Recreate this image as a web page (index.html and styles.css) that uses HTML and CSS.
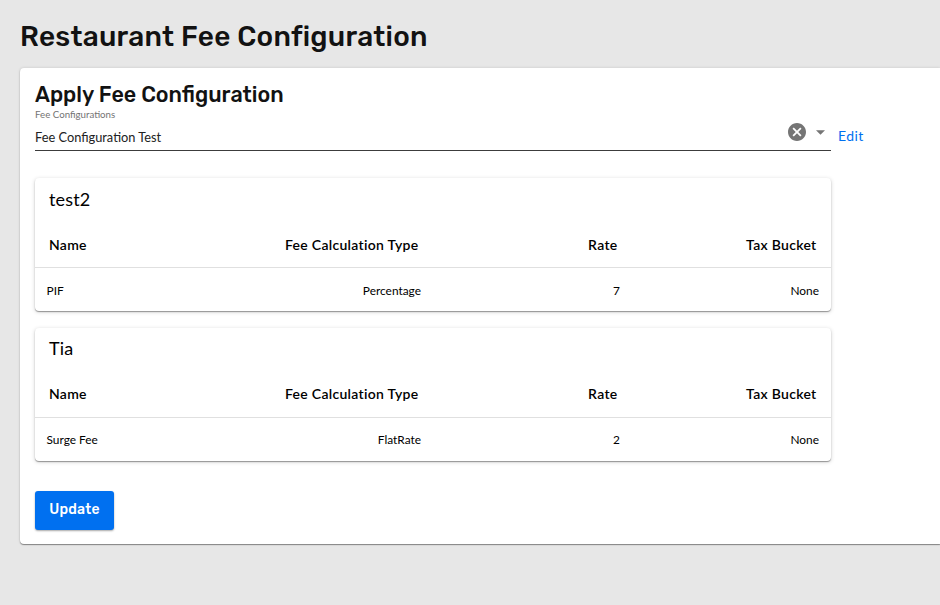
FILE: index.html
```html
<!DOCTYPE html>
<html lang="en">
<head>
    <meta charset="UTF-8">
    <meta name="viewport" content="width=device-width, initial-scale=1.0">
    <title>Restaurant Fee Configuration</title>
    <link rel="stylesheet" href="styles.css">
</head>
<body>
    <main class="page">
        <h1 class="page-title">Restaurant Fee Configuration</h1>

        <section class="panel">
            <h2 class="panel-title">Apply Fee Configuration</h2>

            <div class="config-row">
                <div class="select-field">
                    <label class="select-label">Fee Configurations</label>
                    <div class="select-control">
                        <span class="select-value">Fee Configuration Test</span>
                        <svg class="clear-icon" viewBox="2 2 20 20" width="18" height="18">
                            <path d="M12 2C6.47 2 2 6.47 2 12s4.47 10 10 10 10-4.47 10-10S17.53 2 12 2zm5 13.59L15.59 17 12 13.41 8.41 17 7 15.59 10.59 12 7 8.41 8.41 7 12 10.59 15.59 7 17 8.41 13.41 12 17 15.59z"/>
                        </svg>
                        <svg class="arrow-icon" viewBox="0 0 10 5" width="9" height="5">
                            <path d="M0 0h10L5 5z"/>
                        </svg>
                    </div>
                </div>
                <a class="edit-link" href="#">Edit</a>
            </div>

            <div class="fee-card">
                <h3 class="fee-name">test2</h3>
                <table class="fee-table">
                    <thead>
                        <tr>
                            <th>Name</th>
                            <th>Fee Calculation Type</th>
                            <th>Rate</th>
                            <th>Tax Bucket</th>
                        </tr>
                    </thead>
                    <tbody>
                        <tr>
                            <td>PIF</td>
                            <td>Percentage</td>
                            <td>7</td>
                            <td>None</td>
                        </tr>
                    </tbody>
                </table>
            </div>

            <div class="fee-card">
                <h3 class="fee-name">Tia</h3>
                <table class="fee-table">
                    <thead>
                        <tr>
                            <th>Name</th>
                            <th>Fee Calculation Type</th>
                            <th>Rate</th>
                            <th>Tax Bucket</th>
                        </tr>
                    </thead>
                    <tbody>
                        <tr>
                            <td>Surge Fee</td>
                            <td>FlatRate</td>
                            <td>2</td>
                            <td>None</td>
                        </tr>
                    </tbody>
                </table>
            </div>

            <button class="update-button" type="button">Update</button>
        </section>
    </main>
</body>
</html>
```
FILE: styles.css
```css
* {
    box-sizing: border-box;
}

body {
    margin: 0;
    background-color: #e7e7e7;
    color: #000;
    font-family: Lato, "Liberation Sans", sans-serif;
    font-size: 14px;
}

.page {
    padding: 16px 0 60px 20px;
}

/* headings */
.page-title,
.panel-title {
    margin: 0;
    color: #121212;
    font-family: Rubik, Roboto, sans-serif;
    font-weight: 500;
}

.page-title {
    height: 52px;
    font-size: 28px;
    line-height: 41px;
    letter-spacing: 0.25px;
}

.panel-title {
    font-size: 21.5px;
    line-height: 26px;
}

/* main panel */
.panel {
    height: 476px;
    padding: 14px 15px;
    background-color: #fff;
    border-radius: 4px 0 0 4px;
    box-shadow: 0 1px 1px rgba(0, 0, 0, 0.4), 0 0 3px rgba(0, 0, 0, 0.15);
}

/* config select */
.config-row {
    display: flex;
    gap: 7px;
    margin-bottom: 27.4px;
}

.select-field {
    width: 796px;
    height: 43px;
    border-bottom: 1px solid #3c3c3c;
}

.select-label {
    display: block;
    color: #737373;
    font-size: 9.7px;
    line-height: 13px;
}

.select-control {
    display: flex;
    align-items: center;
    height: 22px;
}

.select-value {
    flex: 1;
    padding-top: 10px;
    color: #222;
    font-size: 12.8px;
    line-height: 22px;
}

.clear-icon {
    margin-right: 10px;
    fill: #757575;
}

.arrow-icon {
    margin-right: 6px;
    fill: #757575;
}

.edit-link {
    padding-top: 19px;
    color: #0070f0;
    font-size: 14px;
    line-height: 18px;
    letter-spacing: 0.4px;
    text-decoration: none;
}

/* fee cards */
.fee-card {
    width: 796px;
    height: 133px;
    margin-bottom: 16.2px;
    border-radius: 4px;
    box-shadow: 0 1px 1px rgba(0, 0, 0, 0.35), 0 1px 4px rgba(0, 0, 0, 0.18);
}

.fee-name {
    height: 43px;
    margin: 0;
    padding: 0.4px 14px 0;
    font-size: 18px;
    font-weight: 400;
    line-height: 41px;
    letter-spacing: 0.15px;
}

.fee-table {
    width: 100%;
    table-layout: fixed;
    border-collapse: separate;
    border-spacing: 0;
}

.fee-table th {
    height: 47px;
    padding: 0 14.5px 0 14px;
    border-bottom: 1px solid #e0e0e0;
    font-size: 14px;
    font-weight: 600;
    letter-spacing: 0.3px;
    text-align: right;
}

.fee-table td {
    height: 43px;
    padding: 1.2px 12px 0 11.5px;
    font-size: 11.9px;
    text-align: right;
}

.fee-table th:first-child,
.fee-table td:first-child {
    text-align: left;
}

.update-button {
    width: 79px;
    height: 39px;
    margin-top: 14px;
    padding: 0 0 2px;
    border: none;
    border-radius: 3px;
    background-color: #0070f0;
    box-shadow: 0 1px 2px rgba(0, 0, 0, 0.35);
    color: #fff;
    font-family: Rubik, Roboto, sans-serif;
    font-size: 14px;
    font-weight: 500;
    letter-spacing: 0.2px;
}
```
